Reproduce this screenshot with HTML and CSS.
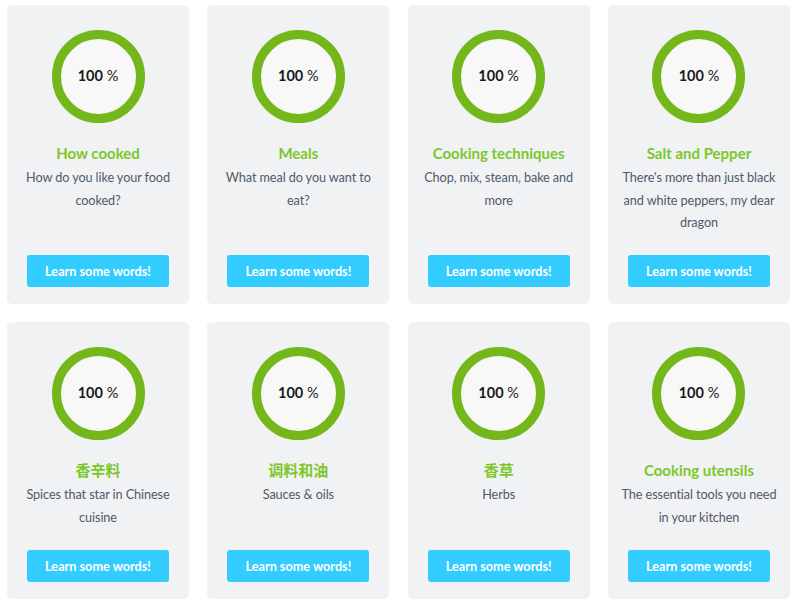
FILE: index.html
```html
<!DOCTYPE html>
<html lang="en">
<head>
<meta charset="utf-8">
<title>Topics</title>
<link rel="stylesheet" href="styles.css">
</head>
<body>
<main class="grid">
  <section class="card">
    <div class="ring"><span class="pct"><b>100</b> %</span></div>
    <h2 class="title">How cooked</h2>
    <p class="desc">How do you like your food cooked?</p>
    <a class="btn" href="#">Learn some words!</a>
  </section>
  <section class="card">
    <div class="ring"><span class="pct"><b>100</b> %</span></div>
    <h2 class="title">Meals</h2>
    <p class="desc">What meal do you want to eat?</p>
    <a class="btn" href="#">Learn some words!</a>
  </section>
  <section class="card">
    <div class="ring"><span class="pct"><b>100</b> %</span></div>
    <h2 class="title">Cooking techniques</h2>
    <p class="desc">Chop, mix, steam, bake and more</p>
    <a class="btn" href="#">Learn some words!</a>
  </section>
  <section class="card">
    <div class="ring"><span class="pct"><b>100</b> %</span></div>
    <h2 class="title">Salt and Pepper</h2>
    <p class="desc">There's more than just black and white peppers, my dear dragon</p>
    <a class="btn" href="#">Learn some words!</a>
  </section>
  <section class="card">
    <div class="ring"><span class="pct"><b>100</b> %</span></div>
    <h2 class="title">香辛料</h2>
    <p class="desc">Spices that star in Chinese cuisine</p>
    <a class="btn" href="#">Learn some words!</a>
  </section>
  <section class="card">
    <div class="ring"><span class="pct"><b>100</b> %</span></div>
    <h2 class="title">调料和油</h2>
    <p class="desc">Sauces &amp; oils</p>
    <a class="btn" href="#">Learn some words!</a>
  </section>
  <section class="card">
    <div class="ring"><span class="pct"><b>100</b> %</span></div>
    <h2 class="title">香草</h2>
    <p class="desc">Herbs</p>
    <a class="btn" href="#">Learn some words!</a>
  </section>
  <section class="card">
    <div class="ring"><span class="pct"><b>100</b> %</span></div>
    <h2 class="title">Cooking utensils</h2>
    <p class="desc">The essential tools you need in your kitchen</p>
    <a class="btn" href="#">Learn some words!</a>
  </section>
</main>
</body>
</html>
```

FILE: styles.css
```css
html, body {
  margin: 0;
  padding: 0;
  background: #ffffff;
}
body {
  font-family: Lato, "Noto Sans CJK SC", sans-serif;
}
.grid {
  display: grid;
  grid-template-columns: repeat(4, 1fr);
  column-gap: 18.3px;
  row-gap: 18px;
  padding: 5px 10px 0 7px;
}
.card {
  background: #f1f2f4;
  border-radius: 5px;
  display: flex;
  flex-direction: column;
  align-items: center;
  padding: 25px 10px 17px;
  text-align: center;
}
.ring {
  box-sizing: border-box;
  width: 93px;
  height: 93px;
  border-radius: 50%;
  border: 9px solid #74b71b;
  background: #f8f8f8;
  display: flex;
  align-items: center;
  justify-content: center;
  padding-bottom: 2px;
}
.pct {
  font-size: 14.5px;
  font-weight: 400;
  color: #1a1a1a;
}
.pct b {
  font-weight: 700;
}
.title {
  margin: 19px 0 0;
  font-size: 15px;
  line-height: 22px;
  font-weight: 700;
  color: #7cc72a;
}
.desc {
  margin: 2px 0 21.5px;
  font-size: 12.7px;
  line-height: 22.5px;
  letter-spacing: -0.1px;
  color: #4f5b69;
}
.btn {
  margin-top: auto;
  box-sizing: border-box;
  width: 142px;
  height: 32px;
  display: flex;
  align-items: center;
  justify-content: center;
  background: #33ccff;
  border-radius: 3px;
  color: #ffffff;
  font-size: 12.7px;
  font-weight: 700;
  text-decoration: none;
}
```
